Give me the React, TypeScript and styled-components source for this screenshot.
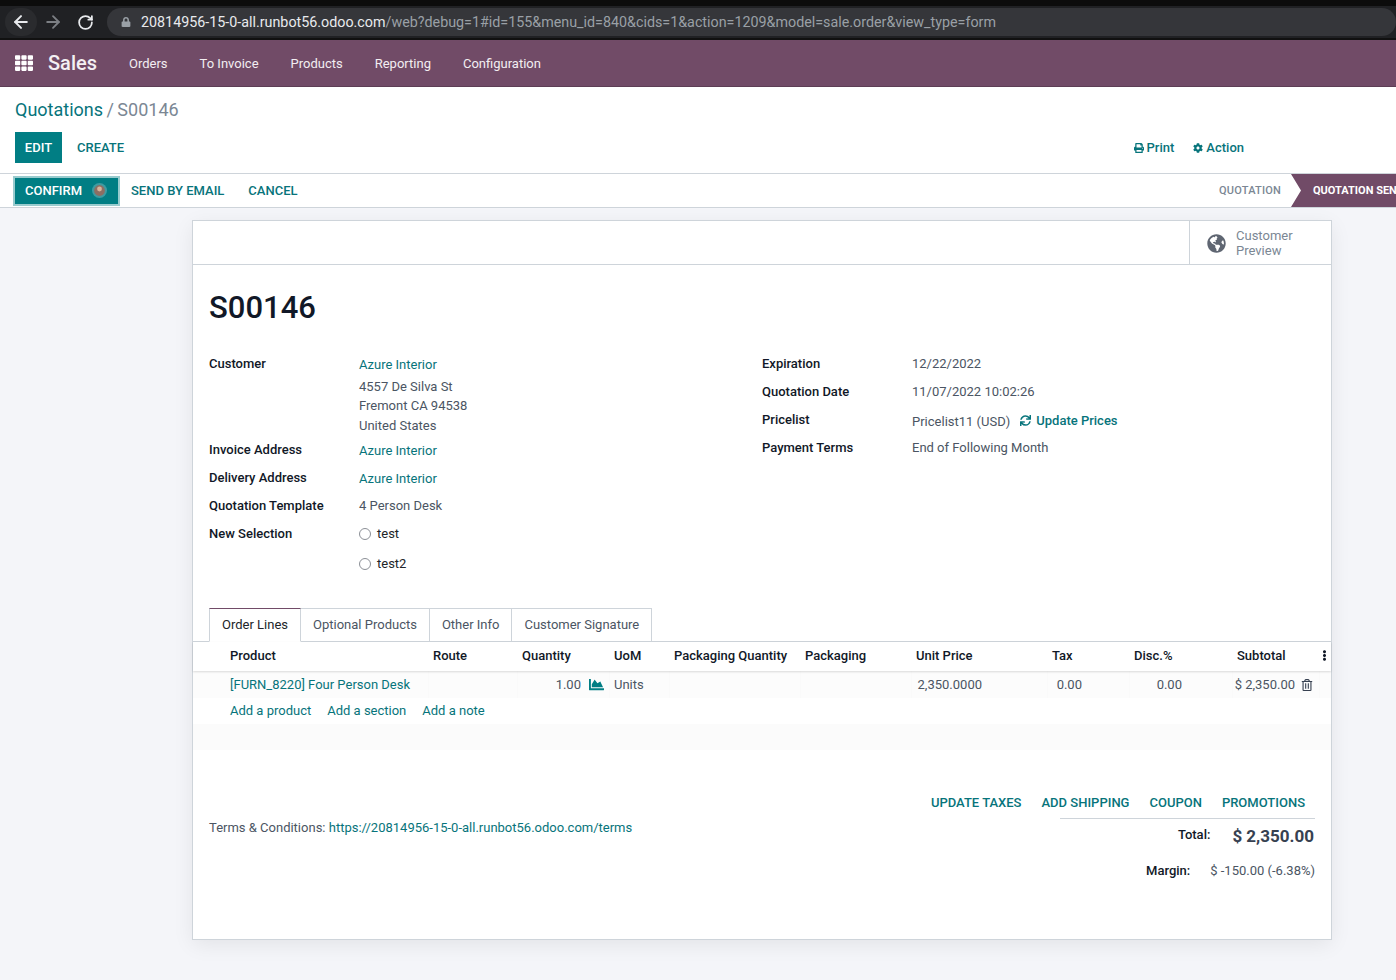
import React from "react";
import styled, { createGlobalStyle } from "styled-components";
import { ArrowLeft, ArrowRight, RotateCw } from "lucide-react";
import {
  FaLock, FaTh, FaPrint, FaCog, FaGlobeAmericas, FaSync, FaChartArea, FaRegTrashAlt, FaEllipsisV,
} from "react-icons/fa";

const teal = "#017e84";
const tealText = "#07747b";
const purple = "#714b67";
const grayText = "#4b5563";
const dark = "#111827";
const line = "#ced4da";

const Global = createGlobalStyle`
  html, body { margin: 0; padding: 0; background: #f4f5f9; }
  body { font-family: Roboto, "Liberation Sans", sans-serif; font-size: 13px; color: ${grayText}; }
  * { box-sizing: border-box; }
`;

const Page = styled.div`
  width: 1396px;
  height: 980px;
  overflow: hidden;
  display: flex;
  flex-direction: column;
`;

const BrowserBar = styled.div`
  height: 40px;
  background: #202124;
  border-top: 6px solid #0c0c0c;
  border-bottom: 2px solid #111;
  display: flex;
  align-items: center;
  padding-left: 5px;
  color: #e8eaed;
`;
const NavIcon = styled.span<{ $dim?: boolean; $hover?: boolean }>`
  width: 32px;
  height: 28px;
  display: flex;
  align-items: center;
  justify-content: center;
  border-radius: 14px;
  background: ${(p) => (p.$hover ? "#2a2b2e" : "transparent")};
  color: ${(p) => (p.$dim ? "#7c7f84" : "#e8eaed")};
`;
const UrlPill = styled.div`
  margin-left: 6px;
  height: 28px;
  width: 1289px;
  background: #35363a;
  border-radius: 14px;
  display: flex;
  align-items: center;
  padding-left: 14px;
  gap: 10px;
  font-size: 14.3px;
  white-space: nowrap;
  color: #9aa0a6;
`;
const UrlHost = styled.span`
  color: #e8eaed;
`;

const Navbar = styled.nav`
  height: 47px;
  background: ${purple};
  border-bottom: 1px solid #5d3e55;
  display: flex;
  align-items: center;
  color: #fff;
  padding-left: 15px;
`;
const AppName = styled.span`
  font-size: 20px;
  font-weight: 500;
  margin-left: 15px;
  margin-right: 32px;
  opacity: 0.92;
`;
const NavItem = styled.span`
  font-size: 13px;
  margin-right: 32px;
  color: #f3eef2;
`;

const ControlPanel = styled.div`
  height: 87px;
  background: #fff;
  border-bottom: 1px solid ${line};
  padding: 12px 15px 0;
`;
const Breadcrumb = styled.div`
  font-size: 18px;
  line-height: 22px;
  color: #7b8794;
  word-spacing: -1px;
`;
const Crumb = styled.span`
  color: ${tealText};
`;
const ControlRow = styled.div`
  margin-top: 11px;
  display: flex;
  align-items: center;
  height: 31px;
`;
const PrimaryButton = styled.span`
  background: ${teal};
  color: #fff;
  font-weight: 500;
  font-size: 13px;
  height: 31px;
  width: 47px;
  display: flex;
  align-items: center;
  justify-content: center;
`;
const LinkButton = styled.span`
  color: ${tealText};
  font-weight: 500;
  font-size: 13px;
  margin-left: 15px;
`;
const SideActions = styled.div`
  margin-left: auto;
  margin-right: 137px;
  display: flex;
  gap: 19px;
`;
const SideAction = styled.span`
  color: ${tealText};
  font-weight: 500;
  display: flex;
  align-items: center;
  gap: 3px;
  font-size: 13px;
`;

const StatusBar = styled.div`
  height: 34px;
  background: #fff;
  border-bottom: 1px solid ${line};
  display: flex;
  align-items: center;
  padding-left: 13px;
`;
const ConfirmButton = styled.span`
  height: 26px;
  width: 103px;
  background: ${teal};
  box-shadow: 0 0 0 2px #99cbce;
  margin-left: 2px;
  padding: 0 11px 0 10px;
  color: #fff;
  font-weight: 500;
  font-size: 13px;
  display: flex;
  align-items: center;
  justify-content: space-between;
`;
const Avatar = styled.svg`
  width: 15px;
  height: 15px;
  flex: none;
`;
const StatusLink = styled.span<{ $gap: number }>`
  color: ${tealText};
  font-weight: 500;
  font-size: 13px;
  margin-left: ${(p) => p.$gap}px;
`;
const Stages = styled.div`
  margin-left: auto;
  display: flex;
  align-items: center;
  height: 33px;
`;
const Stage = styled.span`
  font-size: 11px;
  font-weight: 500;
  color: #7b8794;
  letter-spacing: 0.2px;
  margin-right: 10px;
`;
const ActiveStage = styled.span`
  width: 105px;
  height: 33px;
  background: ${purple};
  color: #fff;
  font-size: 11px;
  font-weight: 700;
  white-space: nowrap;
  overflow: hidden;
  display: flex;
  align-items: center;
  padding-left: 22px;
  clip-path: polygon(0 0, 100% 0, 100% 100%, 0 100%, 10px 50%);
`;

const SheetWrap = styled.div`
  padding: 12px 0 0 192px;
`;
const Sheet = styled.div`
  width: 1140px;
  height: 720px;
  background: #fff;
  border: 1px solid ${line};
  box-shadow: 0 5px 20px -1px rgba(0, 0, 0, 0.08);
  display: flex;
  flex-direction: column;
`;
const ButtonBox = styled.div`
  height: 44px;
  border-bottom: 1px solid ${line};
  display: flex;
  justify-content: flex-end;
`;
const StatButton = styled.div`
  width: 142px;
  border-left: 1px solid ${line};
  display: flex;
  align-items: center;
  padding-left: 17px;
  gap: 10px;
  color: #7b8794;
  line-height: 15px;
`;
const GlobeIcon = styled(FaGlobeAmericas)`
  color: #5f6672;
  margin-top: 2px;
`;
const Title = styled.h1`
  margin: 24px 0 0 16px;
  font-size: 31px;
  line-height: 38px;
  font-weight: 500;
  color: ${dark};
`;
const Groups = styled.div`
  margin: 28px 0 0 16px;
  display: grid;
  grid-template-columns: 553px 1fr;
  height: 253px;
`;
const Group = styled.div`
  display: flex;
  flex-direction: column;
`;
const Row = styled.div<{ $h: number }>`
  display: grid;
  grid-template-columns: 150px 1fr;
  min-height: ${(p) => p.$h}px;
`;
const Label = styled.div`
  font-weight: 500;
  color: ${dark};
  line-height: 16px;
  padding-top: 1px;
`;
const Value = styled.div<{ $lift?: boolean }>`
  line-height: 19.5px;
  margin-top: ${(p) => (p.$lift ? -1 : 0)}px;
`;
const Address = styled.div`
  line-height: 19.5px;
  margin-top: 2.75px;
`;
const LinkValue = styled.a`
  color: ${tealText};
  display: block;
  line-height: 19px;
`;
const InlineAction = styled.span`
  color: ${tealText};
  font-weight: 500;
  margin-left: 10px;
  display: inline-flex;
  align-items: center;
  gap: 5px;
`;
const RadioLine = styled.label`
  display: flex;
  align-items: center;
  gap: 6px;
  color: #212529;
  height: 17px;
  margin-bottom: 13px;
`;
const RadioMark = styled.span`
  width: 12px;
  height: 12px;
  border-radius: 50%;
  border: 1px solid #8b8f96;
  background: #fff;
`;

const Tabs = styled.div`
  height: 34px;
  padding-left: 16px;
  display: flex;
  border-bottom: 1px solid ${line};
`;
const Tab = styled.div<{ $active?: boolean }>`
  height: 34px;
  padding: 0 12px 2px;
  display: flex;
  align-items: center;
  background: #fff;
  color: ${(p) => (p.$active ? "#212529" : grayText)};
  border: 1px solid ${line};
  border-left-width: ${(p) => (p.$active ? 1 : 0)}px;
  border-top-color: ${(p) => (p.$active ? purple : line)};
  border-bottom-color: ${(p) => (p.$active ? "#fff" : line)};
`;

const columns = "33px 203px 89px 92px 60px 131px 111px 136px 82px 103px 87px 11px";
const HeaderRow = styled.div`
  height: 29px;
  padding-bottom: 2px;
  display: grid;
  grid-template-columns: ${columns};
  align-items: center;
  box-shadow: 0 1px 2px rgba(0, 0, 0, 0.14);
  font-weight: 500;
  color: ${dark};
  position: relative;
`;
const HeaderCell = styled.div`
  padding-left: 4px;
  white-space: nowrap;
  color: ${dark};
`;
const Dots = styled(FaEllipsisV)`
  margin-left: -1px;
  color: ${dark};
`;
const DataRow = styled.div`
  height: 27px;
  display: grid;
  grid-template-columns: ${columns};
  align-items: stretch;
  background: #fcfcfc;
  color: ${grayText};
`;
const DataCell = styled.div<{ $pr?: number; $right?: boolean; $link?: boolean }>`
  display: flex;
  align-items: center;
  justify-content: ${(p) => (p.$right ? "flex-end" : "flex-start")};
  padding: ${(p) => (p.$right ? `0 ${p.$pr ?? 0}px 0 0` : "0 0 0 4px")};
  color: ${(p) => (p.$link ? tealText : "inherit")};
  white-space: nowrap;
  border-right: 1px solid #fafafa;
`;
const ChartIcon = styled(FaChartArea)`
  color: ${teal};
  margin-left: 8px;
`;
const TrashIcon = styled(FaRegTrashAlt)`
  color: #374151;
  margin-left: 6px;
`;
const AddRow = styled.div`
  height: 26px;
  padding: 0 0 2px 37px;
  display: flex;
  align-items: center;
  gap: 16px;
`;
const AddLink = styled.a`
  color: ${tealText};
`;
const EmptyRow = styled.div`
  height: 26px;
  background: #fbfbfb;
`;

const Actions = styled.div`
  margin-top: 45px;
  height: 16px;
  padding-right: 26px;
  display: flex;
  justify-content: flex-end;
  gap: 20px;
`;
const ActionLink = styled.span`
  color: ${tealText};
  font-weight: 500;
  font-size: 13px;
  line-height: 16px;
`;
const Footer = styled.div`
  margin-top: 7px;
  padding: 0 16px;
  display: flex;
  justify-content: space-between;
`;
const Terms = styled.div`
  margin-top: 2px;
  line-height: 16px;
`;
const Totals = styled.div`
  width: 255px;
  border-top: 1px solid ${line};
`;
const TotalLine = styled.div`
  margin-top: 6px;
  display: flex;
  justify-content: flex-end;
  align-items: center;
  height: 22px;
  gap: 22px;
  padding-right: 1px;
`;
const TotalLabel = styled.span`
  color: ${dark};
  font-weight: 500;
  margin-top: -4px;
`;
const TotalValue = styled.span`
  font-size: 17px;
  font-weight: 700;
  color: #374151;
`;
const MarginLine = styled.div`
  margin-top: 16px;
  display: flex;
  justify-content: flex-end;
  align-items: center;
  gap: 20px;
`;
const MarginLabel = styled.span`
  color: ${dark};
  font-weight: 500;
`;

export default function App() {
  return (
    <Page>
      <Global />
      <BrowserBar>
        <NavIcon $hover><ArrowLeft size={20} strokeWidth={2.4} /></NavIcon>
        <NavIcon $dim><ArrowRight size={20} strokeWidth={2.2} /></NavIcon>
        <NavIcon><RotateCw size={17} strokeWidth={2.5} /></NavIcon>
        <UrlPill>
          <FaLock size={10} />
          <span>
            <UrlHost>20814956-15-0-all.runbot56.odoo.com</UrlHost>
            /web?debug=1#id=155&amp;menu_id=840&amp;cids=1&amp;action=1209&amp;model=sale.order&amp;view_type=form
          </span>
        </UrlPill>
      </BrowserBar>

      <Navbar>
        <FaTh size={18} />
        <AppName>Sales</AppName>
        <NavItem>Orders</NavItem>
        <NavItem>To Invoice</NavItem>
        <NavItem>Products</NavItem>
        <NavItem>Reporting</NavItem>
        <NavItem>Configuration</NavItem>
      </Navbar>

      <ControlPanel>
        <Breadcrumb><Crumb>Quotations</Crumb> / S00146</Breadcrumb>
        <ControlRow>
          <PrimaryButton>EDIT</PrimaryButton>
          <LinkButton>CREATE</LinkButton>
          <SideActions>
            <SideAction><FaPrint size={10} /> Print</SideAction>
            <SideAction><FaCog size={10} /> Action</SideAction>
          </SideActions>
        </ControlRow>
      </ControlPanel>

      <StatusBar>
        <ConfirmButton>
          CONFIRM
          <Avatar viewBox="0 0 15 15">
            <circle cx="7.5" cy="7.5" r="7.5" fill="#3f9ba1" />
            <circle cx="7.5" cy="7.5" r="5.4" fill="#8d6e63" />
            <circle cx="7.5" cy="6" r="2.4" fill="#d8b49c" />
          </Avatar>
        </ConfirmButton>
        <StatusLink $gap={13}>SEND BY EMAIL</StatusLink>
        <StatusLink $gap={24}>CANCEL</StatusLink>
        <Stages>
          <Stage>QUOTATION</Stage>
          <ActiveStage>QUOTATION SENT</ActiveStage>
        </Stages>
      </StatusBar>

      <SheetWrap>
        <Sheet>
          <ButtonBox>
            <StatButton>
              <GlobeIcon size={19} />
              <span>Customer<br />Preview</span>
            </StatButton>
          </ButtonBox>
          <Title>S00146</Title>
          <Groups>
            <Group>
              <Row $h={86}>
                <Label>Customer</Label>
                <Value>
                  <LinkValue>Azure Interior</LinkValue>
                  <Address>
                    4557 De Silva St<br />Fremont CA 94538<br />United States
                  </Address>
                </Value>
              </Row>
              <Row $h={28}><Label>Invoice Address</Label><LinkValue>Azure Interior</LinkValue></Row>
              <Row $h={28}><Label>Delivery Address</Label><LinkValue>Azure Interior</LinkValue></Row>
              <Row $h={28}><Label>Quotation Template</Label><Value $lift>4 Person Desk</Value></Row>
              <Row $h={60}>
                <Label>New Selection</Label>
                <div>
                  <RadioLine><RadioMark />test</RadioLine>
                  <RadioLine><RadioMark />test2</RadioLine>
                </div>
              </Row>
            </Group>
            <Group>
              <Row $h={28}><Label>Expiration</Label><Value $lift>12/22/2022</Value></Row>
              <Row $h={28}><Label>Quotation Date</Label><Value $lift>11/07/2022 10:02:26</Value></Row>
              <Row $h={28}>
                <Label>Pricelist</Label>
                <Value>
                  Pricelist11 (USD)
                  <InlineAction><FaSync size={11} /> Update Prices</InlineAction>
                </Value>
              </Row>
              <Row $h={28}><Label>Payment Terms</Label><Value $lift>End of Following Month</Value></Row>
            </Group>
          </Groups>

          <Tabs>
            <Tab $active>Order Lines</Tab>
            <Tab>Optional Products</Tab>
            <Tab>Other Info</Tab>
            <Tab>Customer Signature</Tab>
          </Tabs>

          <HeaderRow>
            <span />
            <HeaderCell>Product</HeaderCell>
            <HeaderCell>Route</HeaderCell>
            <HeaderCell>Quantity</HeaderCell>
            <HeaderCell>UoM</HeaderCell>
            <HeaderCell>Packaging Quantity</HeaderCell>
            <HeaderCell>Packaging</HeaderCell>
            <HeaderCell>Unit Price</HeaderCell>
            <HeaderCell>Tax</HeaderCell>
            <HeaderCell>Disc.%</HeaderCell>
            <HeaderCell>Subtotal</HeaderCell>
            <Dots size={11} />
          </HeaderRow>
          <DataRow>
            <span />
            <DataCell $link>[FURN_8220] Four Person Desk</DataCell>
            <DataCell />
            <DataCell $right $pr={5}>1.00<ChartIcon size={15} /></DataCell>
            <DataCell>Units</DataCell>
            <DataCell />
            <DataCell />
            <DataCell $right $pr={65}>2,350.0000</DataCell>
            <DataCell $right $pr={47}>0.00</DataCell>
            <DataCell $right $pr={50}>0.00</DataCell>
            <DataCell $right $pr={6}>$ 2,350.00<TrashIcon size={12} /></DataCell>
            <span />
          </DataRow>
          <AddRow>
            <AddLink>Add a product</AddLink>
            <AddLink>Add a section</AddLink>
            <AddLink>Add a note</AddLink>
          </AddRow>
          <EmptyRow />

          <Actions>
            <ActionLink>UPDATE TAXES</ActionLink>
            <ActionLink>ADD SHIPPING</ActionLink>
            <ActionLink>COUPON</ActionLink>
            <ActionLink>PROMOTIONS</ActionLink>
          </Actions>
          <Footer>
            <Terms>
              Terms &amp; Conditions: <AddLink>https://20814956-15-0-all.runbot56.odoo.com/terms</AddLink>
            </Terms>
            <Totals>
              <TotalLine>
                <TotalLabel>Total:</TotalLabel>
                <TotalValue>$ 2,350.00</TotalValue>
              </TotalLine>
              <MarginLine>
                <MarginLabel>Margin:</MarginLabel>
                <span>$ -150.00 (-6.38%)</span>
              </MarginLine>
            </Totals>
          </Footer>
        </Sheet>
      </SheetWrap>
    </Page>
  );
}
